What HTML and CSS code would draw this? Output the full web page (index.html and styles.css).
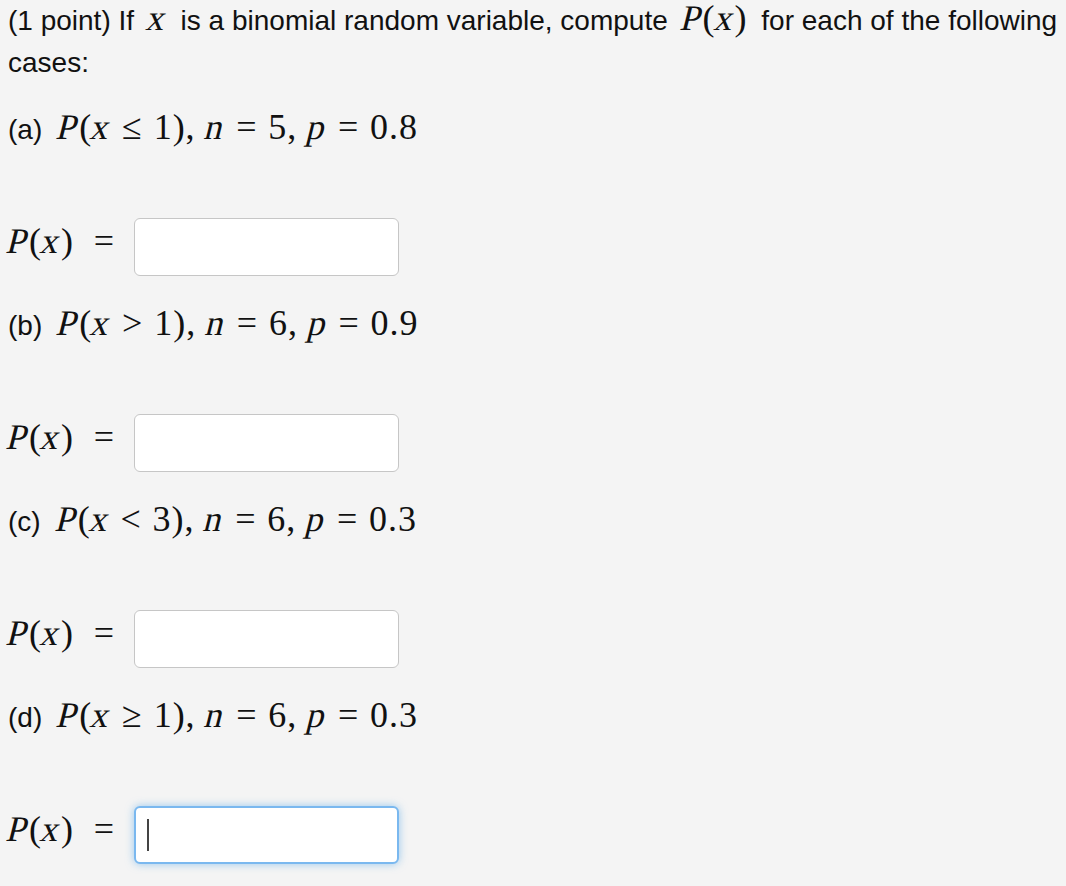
FILE: index.html
```html
<!DOCTYPE html>
<html lang="en">
<head>
<meta charset="utf-8">
<title>Binomial problem</title>
<link rel="stylesheet" href="styles.css">
</head>
<body>
<main class="problem">
  <p class="intro">(1 point) If <span class="m"><i>x</i></span> is a binomial random variable, compute <span class="m"><i>P</i>(<i>x</i>)</span> for each of the following cases:</p>

  <section class="case">
    <p class="part"><span class="lab">(a)</span><span class="m"><i>P</i>(<i>x</i><span class="r">≤</span>1),<i class="c">n</i><span class="r">=</span>5,<i class="c">p</i><span class="r">=</span>0.8</span></p>
    <div class="answer"><span class="alab m"><i>P</i>(<i>x</i>)<span class="r">=</span></span><input class="box" type="text"></div>
  </section>

  <section class="case">
    <p class="part"><span class="lab">(b)</span><span class="m"><i>P</i>(<i>x</i><span class="r">&gt;</span>1),<i class="c">n</i><span class="r">=</span>6,<i class="c">p</i><span class="r">=</span>0.9</span></p>
    <div class="answer"><span class="alab m"><i>P</i>(<i>x</i>)<span class="r">=</span></span><input class="box" type="text"></div>
  </section>

  <section class="case">
    <p class="part"><span class="lab">(c)</span><span class="m"><i>P</i>(<i>x</i><span class="r">&lt;</span>3),<i class="c">n</i><span class="r">=</span>6,<i class="c">p</i><span class="r">=</span>0.3</span></p>
    <div class="answer"><span class="alab m"><i>P</i>(<i>x</i>)<span class="r">=</span></span><input class="box" type="text"></div>
  </section>

  <section class="case">
    <p class="part"><span class="lab">(d)</span><span class="m"><i>P</i>(<i>x</i><span class="r">≥</span>1),<i class="c">n</i><span class="r">=</span>6,<i class="c">p</i><span class="r">=</span>0.3</span></p>
    <div class="answer"><span class="alab m"><i>P</i>(<i>x</i>)<span class="r">=</span></span><span class="boxwrap"><input class="box focus" type="text"><span class="caret"></span></span></div>
  </section>
</main>
</body>
</html>
```

FILE: styles.css
```css
html, body {
  margin: 0;
  padding: 0;
  background: #f4f4f4;
}

body {
  font-family: "Liberation Sans", Arial, sans-serif;
  font-size: 28px;
  color: #111;
}

.problem {
  padding: 0 0 0 8px;
}

.intro {
  margin: 0;
  line-height: 41.5px;
}

.intro .m {
  margin: 0 6px;
}

.m {
  font-family: "Liberation Serif", "Times New Roman", serif;
  font-size: 36px;
  letter-spacing: 1px;
  line-height: 1;
  white-space: nowrap;
}

.m i {
  display: inline-block;
  font-style: normal;
  transform: skewX(-14deg);
}

.r {
  margin: 0 0.3em;
}

.c {
  margin-left: 0.3em;
}

.case {
  display: flex;
  flex-direction: column;
}

.intro + .case {
  margin-top: 26px;
}

.part {
  margin: 0;
  height: 40px;
  line-height: 40px;
}

.lab {
  margin-right: 16px;
}

.answer {
  display: flex;
  align-items: flex-start;
  margin-top: 69px;
  margin-bottom: 29px;
}

.alab {
  width: 126px;
  line-height: 40px;
  margin-top: 3px;
}

.alab .r {
  margin: 0 0 0 0.55em;
}

.box {
  box-sizing: border-box;
  width: 265px;
  height: 58px;
  margin: 0;
  padding: 0 12px;
  border: 1.5px solid #c6c6c6;
  border-radius: 6px;
  background: #fff;
  font: inherit;
  outline: none;
}

.boxwrap {
  position: relative;
  display: block;
}

.box.focus {
  border: 2px solid #7ab8ef;
  box-shadow: 0 0 8px rgba(102, 175, 233, 0.65);
}

.caret {
  position: absolute;
  left: 13px;
  top: 13px;
  width: 2px;
  height: 32px;
  background: #444;
}
```
